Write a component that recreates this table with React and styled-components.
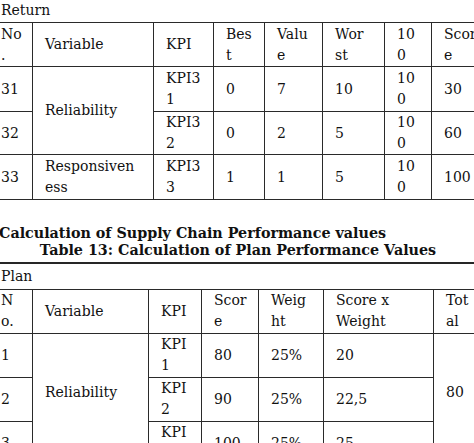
import styled, { createGlobalStyle } from "styled-components";

const GlobalStyle = createGlobalStyle`
  html, body {
    margin: 0;
    padding: 0;
    background: #ffffff;
    overflow: hidden;
  }
`;

const Page = styled.div`
  width: 520px;
  margin-left: -12px;
  margin-top: -12px;
  font-family: "DejaVu Serif", "Liberation Serif", serif;
  color: #111111;
`;

const Table = styled.table`
  border-collapse: collapse;
  table-layout: fixed;
  width: ${(p) => p.width}px;
  font-size: 14px;
  line-height: 21px;
`;

const Row = styled.tr`
  height: ${(p) => p.h}px;
`;

const Cell = styled.td`
  border: 1.5px solid #2a2a2a;
  padding: 0 3px ${(p) => p.$shift || 0}px 12px;
  vertical-align: middle;
  white-space: pre-line;
  text-align: left;
  overflow: hidden;
`;

const TitleCell = styled.td`
  border: 1.5px solid #2a2a2a;
  border-top: ${(p) => (p.$thick ? "2.5px solid #262626" : "1.5px solid #2a2a2a")};
  padding: 0 0 ${(p) => p.$pb}px 12px;
  vertical-align: bottom;
`;

const Headings = styled.div`
  width: 500px;
  margin-top: 25px;
  margin-bottom: 3px;
  font-size: 14.3px;
  line-height: 17px;
  font-weight: bold;
`;

const HeadLine = styled.div`
  text-align: ${(p) => (p.$center ? "center" : "left")};
  padding-left: ${(p) => (p.$center ? 0 : 11)}px;
`;

const t1cols = [44, 121, 60, 51, 58, 62, 47, 60];
const t2cols = [44, 116, 53, 57, 65, 110, 60];

const t1head = ["No\n.", "Variable", "KPI", "Bes\nt", "Valu\ne", "Wor\nst", "10\n0", "Scor\ne"];
const t2head = ["N\no.", "Variable", "KPI", "Scor\ne", "Weig\nht", "Score x\nWeight", "Tot\nal"];

const sum = (a) => a.reduce((s, v) => s + v, 0);

const App = () => {
  return (
    <>
      <GlobalStyle />
      <Page>
        <Table width={sum(t1cols)}>
          <colgroup>
            {t1cols.map((w, i) => (
              <col key={i} style={{ width: w }} />
            ))}
          </colgroup>
          <tbody>
            <Row h={34}>
              <TitleCell colSpan={8} $pb={1}>
                Return
              </TitleCell>
            </Row>
            <Row h={44}>
              {t1head.map((h, i) => (
                <Cell key={i}>{h}</Cell>
              ))}
            </Row>
            <Row h={45}>
              <Cell>31</Cell>
              <Cell rowSpan={2}>Reliability</Cell>
              <Cell>{"KPI3\n1"}</Cell>
              <Cell>0</Cell>
              <Cell>7</Cell>
              <Cell>10</Cell>
              <Cell>{"10\n0"}</Cell>
              <Cell>30</Cell>
            </Row>
            <Row h={43}>
              <Cell>32</Cell>
              <Cell>{"KPI3\n2"}</Cell>
              <Cell>0</Cell>
              <Cell>2</Cell>
              <Cell>5</Cell>
              <Cell>{"10\n0"}</Cell>
              <Cell>60</Cell>
            </Row>
            <Row h={45}>
              <Cell>33</Cell>
              <Cell>{"Responsiven\ness"}</Cell>
              <Cell>{"KPI3\n3"}</Cell>
              <Cell>1</Cell>
              <Cell>1</Cell>
              <Cell>5</Cell>
              <Cell>{"10\n0"}</Cell>
              <Cell>100</Cell>
            </Row>
          </tbody>
        </Table>

        <Headings>
          <HeadLine>Calculation of Supply Chain Performance values</HeadLine>
          <HeadLine $center>Table 13: Calculation of Plan Performance Values</HeadLine>
        </Headings>

        <Table width={sum(t2cols)}>
          <colgroup>
            {t2cols.map((w, i) => (
              <col key={i} style={{ width: w }} />
            ))}
          </colgroup>
          <tbody>
            <Row h={26}>
              <TitleCell colSpan={7} $thick $pb={2}>
                Plan
              </TitleCell>
            </Row>
            <Row h={44}>
              {t2head.map((h, i) => (
                <Cell key={i}>{h}</Cell>
              ))}
            </Row>
            <Row h={44}>
              <Cell>1</Cell>
              <Cell rowSpan={3} $shift={14}>
                Reliability
              </Cell>
              <Cell>{"KPI\n1"}</Cell>
              <Cell>80</Cell>
              <Cell>25%</Cell>
              <Cell>20</Cell>
              <Cell rowSpan={3} $shift={14}>
                80
              </Cell>
            </Row>
            <Row h={44}>
              <Cell>2</Cell>
              <Cell>{"KPI\n2"}</Cell>
              <Cell>90</Cell>
              <Cell>25%</Cell>
              <Cell>22,5</Cell>
            </Row>
            <Row h={44}>
              <Cell>3</Cell>
              <Cell>{"KPI\n3"}</Cell>
              <Cell>100</Cell>
              <Cell>25%</Cell>
              <Cell>25</Cell>
            </Row>
          </tbody>
        </Table>
      </Page>
    </>
  );
};

export default App;
